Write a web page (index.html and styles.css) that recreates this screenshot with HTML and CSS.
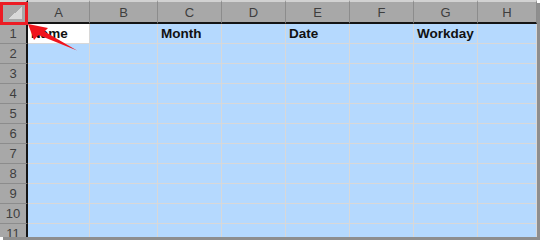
FILE: index.html
```html
<!DOCTYPE html>
<html lang="en">

<head>
    <meta charset="UTF-8">
    <title>Select all</title>
    <link rel="stylesheet" href="styles.css">
</head>

<body>
    <div class="wrap">
        <div class="sheet">
            <div class="hd corner"><span class="tri"></span></div>
            <div class="hd">A</div>
            <div class="hd">B</div>
            <div class="hd">C</div>
            <div class="hd">D</div>
            <div class="hd">E</div>
            <div class="hd">F</div>
            <div class="hd">G</div>
            <div class="hd">H</div>

            <div class="rh">1</div>
            <div class="c active">Name</div>
            <div class="c"></div>
            <div class="c">Month</div>
            <div class="c"></div>
            <div class="c">Date</div>
            <div class="c"></div>
            <div class="c">Workday</div>
            <div class="c"></div>

            <div class="rh">2</div><div class="c"></div><div class="c"></div><div class="c"></div><div class="c"></div><div class="c"></div><div class="c"></div><div class="c"></div><div class="c"></div>
            <div class="rh">3</div><div class="c"></div><div class="c"></div><div class="c"></div><div class="c"></div><div class="c"></div><div class="c"></div><div class="c"></div><div class="c"></div>
            <div class="rh">4</div><div class="c"></div><div class="c"></div><div class="c"></div><div class="c"></div><div class="c"></div><div class="c"></div><div class="c"></div><div class="c"></div>
            <div class="rh">5</div><div class="c"></div><div class="c"></div><div class="c"></div><div class="c"></div><div class="c"></div><div class="c"></div><div class="c"></div><div class="c"></div>
            <div class="rh">6</div><div class="c"></div><div class="c"></div><div class="c"></div><div class="c"></div><div class="c"></div><div class="c"></div><div class="c"></div><div class="c"></div>
            <div class="rh">7</div><div class="c"></div><div class="c"></div><div class="c"></div><div class="c"></div><div class="c"></div><div class="c"></div><div class="c"></div><div class="c"></div>
            <div class="rh">8</div><div class="c"></div><div class="c"></div><div class="c"></div><div class="c"></div><div class="c"></div><div class="c"></div><div class="c"></div><div class="c"></div>
            <div class="rh">9</div><div class="c"></div><div class="c"></div><div class="c"></div><div class="c"></div><div class="c"></div><div class="c"></div><div class="c"></div><div class="c"></div>
            <div class="rh">10</div><div class="c"></div><div class="c"></div><div class="c"></div><div class="c"></div><div class="c"></div><div class="c"></div><div class="c"></div><div class="c"></div>
            <div class="rh">11</div><div class="c"></div><div class="c"></div><div class="c"></div><div class="c"></div><div class="c"></div><div class="c"></div><div class="c"></div><div class="c"></div>
        </div>

        <!-- callout over the select-all corner -->
        <div class="mark"></div>
        <svg class="arrow" width="540" height="240" viewBox="0 0 540 240">
            <polygon points="28,24 48,28 44.5,31.5 77,50.5 38.5,35 34,40" fill="#f0141c" />
        </svg>
    </div>
</body>

</html>
```

FILE: styles.css
```css
body {
    margin: 0;
    background: #ffffff;
    font-family: 'Liberation Sans', Arial, sans-serif;
}

.wrap {
    position: relative;
    width: 540px;
    height: 240px;
}

.sheet {
    width: 537px;
    height: 237px;
    overflow: hidden;
    display: grid;
    grid-template-columns: 28px 62px 68px 64px 64px 64px 64px 64px 59px;
    grid-template-rows: 24px;
    grid-auto-rows: 20px;
    box-shadow: 3px 3px 0 #8e8e8e;
}

.hd {
    box-sizing: border-box;
    background: #a8a8a8;
    border-top: 2px solid #d2d2d2;
    border-right: 1px solid #8c8c8c;
    border-bottom: 2px solid #141414;
    color: #3e3e3e;
    font-size: 13px;
    display: flex;
    align-items: center;
    justify-content: center;
}

.corner {
    position: relative;
    border-right: 2px solid #141414;
}

.tri {
    position: absolute;
    right: 4px;
    bottom: 3px;
    width: 14px;
    height: 12px;
    background: linear-gradient(to bottom right, transparent 50%, #d8d8d8 50%);
}

.rh {
    box-sizing: border-box;
    background: #a8a8a8;
    border-right: 2px solid #141414;
    border-bottom: 1px solid #8c8c8c;
    color: #3e3e3e;
    font-size: 13px;
    display: flex;
    align-items: center;
    justify-content: center;
}

.c {
    box-sizing: border-box;
    background: #b5d9fe;
    border-right: 1px solid #d8d8d8;
    border-bottom: 1px solid #d8d8d8;
    font-size: 13.5px;
    font-weight: bold;
    color: #111111;
    padding: 2px 0 0 3px;
    white-space: nowrap;
}

.active {
    background: #ffffff;
}

.mark {
    position: absolute;
    left: 0;
    top: 2px;
    width: 28px;
    height: 23px;
    box-sizing: border-box;
    border: 3px solid #ec1c24;
}

.arrow {
    position: absolute;
    left: 0;
    top: 0;
}
```
